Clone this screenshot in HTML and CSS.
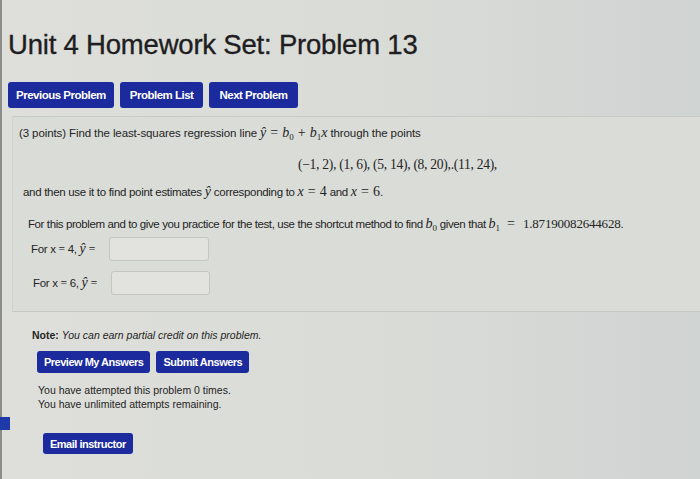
FILE: index.html
```html
<!DOCTYPE html>
<html>
<head>
<meta charset="utf-8">
<link rel="stylesheet" href="styles.css">
</head>
<body>
<div class="page">
  <h1 class="title">Unit 4 Homework Set: Problem 13</h1>
  <div class="nav">
    <span class="btn nav-btn">Previous Problem</span>
    <span class="btn nav-btn wide">Problem List</span>
    <span class="btn nav-btn wide">Next Problem</span>
  </div>
  <div class="problem">
    <p class="line l1">(3 points) Find the least-squares regression line <span class="m">ŷ</span><span class="op">=</span><span class="m">b</span><sub class="ms">0</sub><span class="op">+</span><span class="m">b</span><sub class="ms">1</sub><span class="m">x</span> through the points</p>
    <p class="pts">(−1, 2), (1, 6), (5, 14), (8, 20),.(11, 24),</p>
    <p class="line l3">and then use it to find point estimates <span class="m">ŷ</span> corresponding to <span class="m">x</span><span class="op">=</span><span class="mr">4</span> and <span class="m">x</span><span class="op">=</span><span class="mr">6</span>.</p>
    <p class="line l4">For this problem and to give you practice for the test, use the shortcut method to find <span class="m">b</span><sub class="ms">0</sub> given that <span class="m">b</span><sub class="ms">1</sub><span class="op op-s">=</span><span class="mr num">1.87190082644628</span>.</p>
    <div class="ans a1"><span class="lbl">For x <span class="eq">=</span> 4, <span class="m">ŷ</span> <span class="eq">=</span></span><span class="box"></span></div>
    <div class="ans a2"><span class="lbl">For x <span class="eq">=</span> 6, <span class="m">ŷ</span> <span class="eq">=</span></span><span class="box"></span></div>
  </div>
  <p class="note"><b>Note:</b> <i>You can earn partial credit on this problem.</i></p>
  <div class="actions">
    <span class="btn act-btn">Preview My Answers</span>
    <span class="btn act-btn">Submit Answers</span>
  </div>
  <p class="att">You have attempted this problem 0 times.<br>You have unlimited attempts remaining.</p>
  <div class="email-row">
    <span class="mark"></span>
    <span class="btn email-btn">Email instructor</span>
  </div>
</div>
</body>
</html>
```
FILE: styles.css
```css
html, body {
  margin: 0;
  padding: 0;
  width: 700px;
  height: 479px;
  overflow: hidden;
  background: #d8dad6;
}
body {
  font-family: "Liberation Sans", Arial, sans-serif;
  color: #242424;
}
.page {
  height: 479px;
  border-left: 2px solid #8a8c88;
  background: linear-gradient(90deg, #dedfda 0%, #d9dbd7 60%, #cfd3d2 100%);
  box-sizing: border-box;
  padding-top: 30px;
}
.title {
  margin: 0 0 0 6px;
  font-size: 27.5px;
  line-height: 30px;
  font-weight: normal;
  -webkit-text-stroke: 0.35px #1e1e22;
  color: #1e1e22;
  letter-spacing: -0.2px;
}
.nav {
  display: flex;
  gap: 6px;
  margin: 22px 0 0 6px;
}
.btn {
  display: inline-flex;
  align-items: center;
  justify-content: center;
  background: #1b2a9c;
  color: #fff;
  border-radius: 3px;
  font-weight: bold;
  letter-spacing: -0.5px;
  box-sizing: border-box;
}
.nav-btn {
  height: 26px;
  font-size: 11.5px;
  padding: 0 8px;
}
.nav-btn.wide { padding: 0 10px; }
.problem {
  margin: 8px 0 0 10px;
  height: 196px;
  box-sizing: border-box;
  border-top: 1px solid #c8cac6;
  border-left: 1px solid #d0d2ce;
  border-bottom: 1px solid #c6c8c4;
  background: #dadcd8;
  padding-top: 8px;
  font-size: 11.5px;
  letter-spacing: -0.3px;
}
.line { margin: 0; line-height: 16px; }
.m { font-family: "Liberation Serif", serif; font-style: italic; font-size: 14px; letter-spacing: 0; }
.mr { font-family: "Liberation Serif", serif; font-size: 14px; letter-spacing: 0; }
.op { font-family: "Liberation Serif", serif; font-size: 14px; letter-spacing: 0; padding: 0 4px; }
.op-s { padding: 0 8px 0 7px; }
.num { font-size: 13px; letter-spacing: -0.2px; }
.ms { font-family: "Liberation Serif", serif; font-size: 9px; letter-spacing: 0; }
.l1 { margin-left: 6px; letter-spacing: -0.1px; }
.pts {
  margin: 12px 0 0 285px;
  font-family: "Liberation Serif", serif;
  font-size: 13.6px;
  line-height: 16px;
  letter-spacing: -0.3px;
}
.l3 { margin: 11px 0 0 10px; }
.l4 { margin: 16px 0 0 15px; letter-spacing: -0.4px; }
.ans {
  display: flex;
  align-items: center;
  font-size: 11.5px;
}
.lbl { width: 78px; }
.eq { font-family: "Liberation Serif", serif; }
.a1 { margin: 0 0 0 18px; }
.a2 { margin: 10px 0 0 20px; }
.box {
  width: 100px;
  height: 24px;
  box-sizing: border-box;
  border: 1px solid #c4c6c2;
  border-radius: 3px;
  background: #e2e3df;
}
.a2 .box { width: 99px; }
.note {
  margin: 16px 0 0 30px;
  font-size: 10.5px;
  line-height: 14px;
}
.note b { font-weight: bold; }
.actions {
  display: flex;
  gap: 6px;
  margin: 9px 0 0 35px;
}
.act-btn {
  height: 22px;
  font-size: 11px;
  padding: 0 7px;
}
.att {
  margin: 10px 0 0 36px;
  font-size: 10.5px;
  line-height: 14px;
}
.email-row {
  position: relative;
  margin-top: 22px;
  padding-left: 41px;
}
.mark {
  position: absolute;
  left: -2px;
  top: -16px;
  width: 10px;
  height: 13px;
  background: #1d3aa8;
}
.email-btn {
  height: 21px;
  font-size: 11px;
  padding: 0 7px;
}
```
